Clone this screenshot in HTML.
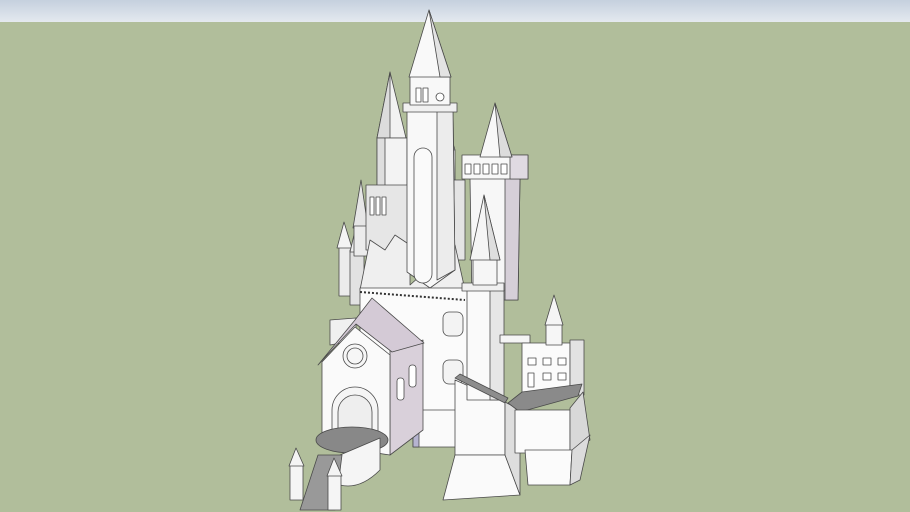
<!DOCTYPE html>
<html><head><style>html,body{margin:0;padding:0;width:910px;height:512px;overflow:hidden;background:#b1be9b}</style></head>
<body>
<svg width="910" height="512" viewBox="0 0 910 512" xmlns="http://www.w3.org/2000/svg">
<defs><linearGradient id="sky" x1="0" y1="0" x2="0" y2="1"><stop offset="0" stop-color="#c5d0de"/><stop offset="1" stop-color="#e4e9ef"/></linearGradient></defs>
<rect x="0" y="0" width="910" height="22" fill="url(#sky)"/>
<rect x="0" y="22" width="910" height="490" fill="#b1be9b"/>
<g stroke="#4a4a4a" stroke-width="0.8" stroke-linejoin="round">
<rect x="339" y="246" width="12" height="50" fill="#ececec"/>
<polygon points="344,222 337,248 352,248" fill="#f4f4f4"/>
<rect x="350" y="250" width="14" height="55" fill="#e2e2e2"/>
<polygon points="357,222 350,252 365,252" fill="#ededed"/>
<polygon points="361,180 353,228 368,228" fill="#e6e6e6"/>
<rect x="354" y="226" width="14" height="30" fill="#ececec"/>
<polygon points="390,72 377,138 406,138" fill="#f2f2f2"/>
<polygon points="390,72 377,138 390,138" fill="#dcdcdc"/>
<rect x="377" y="138" width="30" height="60" fill="#f3f3f3"/>
<rect x="377" y="138" width="8" height="60" fill="#dedede"/>
<rect x="366" y="185" width="42" height="65" fill="#e6e6e6"/>
<rect x="370" y="197" width="4" height="18" fill="#fff"/><rect x="376" y="197" width="4" height="18" fill="#fff"/><rect x="382" y="197" width="4" height="18" fill="#fff"/>
<polygon points="446,120 438,150 455,150" fill="#f0f0f0"/>
<rect x="438" y="150" width="17" height="30" fill="#f1f1f1"/>
<rect x="453" y="180" width="12" height="80" fill="#e4e4e4"/>
<polygon points="470,178 520,178 518,300 472,300" fill="#f7f7f7"/>
<polygon points="505,178 520,178 518,300 505,300" fill="#d6cfd8"/>
<rect x="462" y="155" width="66" height="24" fill="#f8f8f8"/>
<rect x="510" y="155" width="18" height="24" fill="#e0dae2"/>
<polygon points="495,103 480,157 512,157" fill="#f8f8f8"/>
<polygon points="495,103 500,157 512,157" fill="#dcdcdc"/>
<g fill="#fff"><rect x="465" y="164" width="6" height="10"/><rect x="474" y="164" width="6" height="10"/><rect x="483" y="164" width="6" height="10"/><rect x="492" y="164" width="6" height="10"/><rect x="501" y="164" width="6" height="10"/></g>
<polygon points="360,290 370,240 385,250 395,235 410,245 410,285 455,245 465,290" fill="#efefef"/>
<polygon points="407,110 453,110 455,270 430,288 407,272" fill="#f8f8f8"/>
<polygon points="437,110 453,110 455,270 437,280" fill="#ececec"/>
<rect x="414" y="148" width="18" height="135" rx="9" fill="#fafafa"/>
<rect x="403" y="103" width="54" height="9" fill="#f0f0f0"/>
<rect x="410" y="75" width="40" height="30" fill="#f8f8f8"/>
<rect x="416" y="88" width="5" height="14" fill="#fff"/><rect x="423" y="88" width="5" height="14" fill="#fff"/>
<circle cx="440" cy="97" r="4" fill="#fff"/>
<polygon points="429,10 409,77 451,77" fill="#f9f9f9"/>
<polygon points="429,10 440,77 451,77" fill="#e3e3e3"/>
<rect x="360" y="288" width="108" height="135" fill="#fbfbfb"/>
<line x1="360" y1="292" x2="465" y2="300" stroke-dasharray="2 2" stroke="#333" stroke-width="2"/>
<rect x="443" y="312" width="20" height="24" rx="6" fill="#f3f3f3"/>
<rect x="443" y="360" width="20" height="24" rx="6" fill="#f3f3f3"/>
<rect x="413" y="410" width="45" height="37" fill="#fafafa"/>
<rect x="413" y="410" width="6" height="37" fill="#b6b4d0"/>
<polygon points="330,320 356,318 356,340 330,345" fill="#f0f0f0"/>
<polygon points="390,350 423,340 423,430 390,455" fill="#d9d0da"/>
<polygon points="322,362 355,327 390,355 390,455 322,445" fill="#fafafa"/>
<polygon points="318,365 355,320 372,298 424,343 392,352 356,324" fill="#d4cad6"/>
<circle cx="355" cy="356" r="12" fill="#f6f6f6"/>
<circle cx="355" cy="356" r="8" fill="none"/>
<path d="M332,440 L332,410 A23,23 0 0 1 378,410 L378,440 Z" fill="#f5f5f5"/>
<path d="M338,440 L338,412 A17,17 0 0 1 372,412 L372,440 Z" fill="#eee"/>
<rect x="397" y="378" width="7" height="22" rx="3" fill="#fff"/><rect x="409" y="365" width="7" height="22" rx="3" fill="#fff"/>
<ellipse cx="352" cy="440" rx="36" ry="13" fill="#888"/>
<path d="M380,438 L380,470 Q360,490 340,485 L340,455 Z" fill="#f5f5f5"/>
<polygon points="318,455 342,455 335,510 300,510" fill="#999"/>
<rect x="290" y="465" width="13" height="35" fill="#f5f5f5"/>
<polygon points="296,448 289,466 304,466" fill="#f4f4f4"/>
<rect x="328" y="475" width="13" height="35" fill="#f5f5f5"/>
<polygon points="334,458 327,476 342,476" fill="#f4f4f4"/>
<polygon points="455,380 505,402 505,455 455,455" fill="#fafafa"/>
<rect x="467" y="290" width="33" height="110" fill="#fafafa"/>
<rect x="490" y="290" width="14" height="110" fill="#e6e6e6"/>
<rect x="462" y="283" width="42" height="8" fill="#f0f0f0"/>
<rect x="473" y="255" width="24" height="30" fill="#f6f6f6"/>
<polygon points="484,195 470,260 500,260" fill="#f5f5f5"/>
<polygon points="484,195 490,260 500,260" fill="#dedede"/>
<polygon points="455,378 460,374 508,398 505,403" fill="#8d8d8d"/>
<polygon points="455,455 505,455 520,495 443,500" fill="#fafafa"/>
<polygon points="505,402 520,410 520,495 505,455" fill="#dedede"/>
<rect x="500" y="335" width="30" height="8" fill="#f5f5f5"/>
<rect x="522" y="343" width="48" height="55" fill="#fbfbfb"/>
<rect x="570" y="340" width="14" height="55" fill="#e2e2e2"/>
<g fill="#fff"><rect x="528" y="358" width="8" height="7"/><rect x="543" y="358" width="8" height="7"/><rect x="558" y="358" width="8" height="7"/><rect x="543" y="373" width="8" height="7"/><rect x="558" y="373" width="8" height="7"/><rect x="528" y="373" width="6" height="14"/></g>
<rect x="546" y="323" width="16" height="22" fill="#f6f6f6"/>
<polygon points="554,295 545,325 563,325" fill="#f5f5f5"/>
<polygon points="508,403 522,392 582,384 578,396 520,412" fill="#8a8a8a"/>
<rect x="515" y="410" width="55" height="43" fill="#fbfbfb"/>
<polygon points="570,408 583,392 590,440 570,453" fill="#d8d8d8"/>
<polygon points="525,450 572,450 570,485 528,485" fill="#fbfbfb"/>
<polygon points="572,450 590,435 580,480 570,485" fill="#dcdcdc"/>
</g>
</svg>
</body></html>
